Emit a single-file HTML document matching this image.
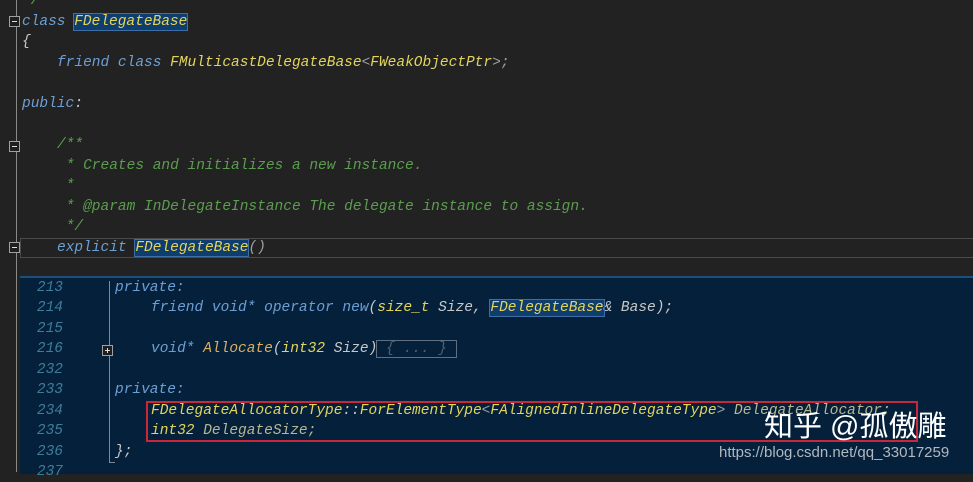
<!DOCTYPE html>
<html><head><meta charset="utf-8"><style>
body{margin:0;width:973px;height:472px;overflow:hidden;background:#222222;position:relative;font-family:"Liberation Mono",monospace;font-size:14.5px;font-style:italic}
.l{position:absolute;white-space:pre;line-height:20px;color:#c8c8c8}
.k{color:#6d9fd4}.t{color:#e3d55c}.c{color:#5a9e4e}.g{color:#c8c8c8}.f{color:#dcb05a}.p{color:#9aa0a6}
.hl{background:#0f3d6e;outline:1px solid #3f6ea5}
.num{position:absolute;left:20px;width:43px;text-align:right;color:#3d7d9c;font-style:italic;line-height:20px}
.box{position:absolute;width:9px;height:9px;border:1px solid #a0a0a0;background:#1e1e1e}
.box:after{content:"";position:absolute;left:2px;top:4px;width:5px;height:1px;background:#ddd}
.plus:before{content:"";position:absolute;left:4px;top:2px;width:1px;height:5px;background:#ddd}
</style></head><body>
<div style="position:absolute;left:16px;top:0;width:1px;height:472px;background:#8a8a8a"></div>
<div class="l c" style="left:22px;top:-9px">*/</div>
<div class="box" style="left:9px;top:16px"></div>
<div class="l" style="left:22px;top:12px"><span class="k">class</span> <span class="t hl">FDelegateBase</span></div>
<div class="l g" style="left:22px;top:32px">{</div>
<div class="l" style="left:57px;top:53px"><span class="k">friend class</span> <span class="t">FMulticastDelegateBase</span><span class="p">&lt;</span><span class="t">FWeakObjectPtr</span><span class="p">&gt;;</span></div>
<div class="l" style="left:22px;top:94px"><span class="k">public</span>:</div>
<div class="box" style="left:9px;top:141px"></div>
<div class="l c" style="left:57px;top:135px">/**</div>
<div class="l c" style="left:57px;top:156px"> * Creates and initializes a new instance.</div>
<div class="l c" style="left:57px;top:176px"> *</div>
<div class="l c" style="left:57px;top:197px"> * @param InDelegateInstance The delegate instance to assign.</div>
<div class="l c" style="left:57px;top:217px"> */</div>
<div style="position:absolute;left:20px;top:238px;width:960px;height:18px;border:1px solid #4a4a4a"></div>
<div class="box" style="left:9px;top:242px"></div>
<div class="l" style="left:57px;top:238px"><span class="k">explicit</span> <span class="t hl">FDelegateBase</span><span class="p">()</span></div>
<div style="position:absolute;left:20px;top:276px;width:953px;height:196px;background:#05203a;border-top:2px solid #1d4f7a"></div>
<div style="position:absolute;left:109px;top:281px;width:1px;height:182px;background:#7a8a9a"></div>
<div style="position:absolute;left:109px;top:462px;width:6px;height:1px;background:#7a8a9a"></div>
<div class="num" style="top:278px">213</div>
<div class="num" style="top:298px">214</div>
<div class="num" style="top:319px">215</div>
<div class="num" style="top:339px">216</div>
<div class="num" style="top:360px">232</div>
<div class="num" style="top:380px">233</div>
<div class="num" style="top:401px">234</div>
<div class="num" style="top:421px">235</div>
<div class="num" style="top:442px">236</div>
<div class="num" style="top:462px">237</div>
<div class="l k" style="left:115px;top:278px">private:</div>
<div class="l" style="left:151px;top:298px"><span class="k">friend void* operator new</span><span class="g">(</span><span class="t">size_t</span> Size, <span class="t hl">FDelegateBase</span>&amp; Base);</div>
<div class="box plus" style="left:102px;top:345px"></div>
<div class="l" style="left:151px;top:339px"><span class="k">void*</span> <span class="f">Allocate</span>(<span class="t">int32</span> Size)<span style="color:#506070;outline:1px solid #607080"> { ... } </span></div>
<div class="l k" style="left:115px;top:380px">private:</div>
<div class="l" style="left:151px;top:401px"><span class="t">FDelegateAllocatorType</span>::<span class="t">ForElementType</span><span class="p">&lt;</span><span class="t">FAlignedInlineDelegateType</span><span class="p">&gt;</span> <span style="color:#b8b890">DelegateAllocator;</span></div>
<div class="l" style="left:151px;top:421px"><span class="t">int32</span> <span style="color:#b8b890">DelegateSize;</span></div>
<div class="l g" style="left:115px;top:442px">};</div>
<div style="position:absolute;left:146px;top:401px;width:768px;height:37px;border:2px solid #c8283a"></div>
<div style="position:absolute;left:764px;top:410px;color:#fff;font-family:'Liberation Sans','Noto Sans CJK SC',sans-serif;font-style:normal;font-size:29px;line-height:34px">知乎 @孤傲雕</div>
<div style="position:absolute;left:719px;top:444px;color:#b0b8c0;font-family:'Liberation Sans',sans-serif;font-style:normal;font-size:15px;line-height:18px">https://blog.csdn.net/qq_33017259</div>
</body></html>
